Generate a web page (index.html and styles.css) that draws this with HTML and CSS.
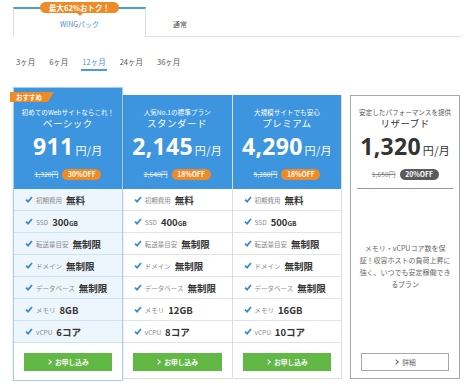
FILE: index.html
```html
<!DOCTYPE html>
<html lang="ja">
  <head>
    <meta charset="UTF-8" />
    <meta name="viewport" content="width=device-width, initial-scale=1.0" />
    <title>料金プラン</title>
    <link rel="stylesheet" href="styles.css">
  </head>
  <body>
    <div class="page">
      <div class="plan-tabs">
        <div class="plan-tab active">
          <span class="badge">最大62%おトク！</span>
          WINGパック
        </div>
        <div class="plan-tab normal">通常</div>
      </div>

      <div class="periods">
        <span class="period">3ヶ月</span>
        <span class="period">6ヶ月</span>
        <span class="period current">12ヶ月</span>
        <span class="period">24ヶ月</span>
        <span class="period">36ヶ月</span>
      </div>

      <div class="cards">
        <div class="card basic">
          <span class="ribbon">おすすめ</span>
          <div class="card-head">
            <p class="lead">初めてのWebサイトならこれ！</p>
            <p class="name">ベーシック</p>
            <p class="price">911<span class="unit">円/月</span></p>
            <p class="discount"><s>1,320円</s><span class="off">30%OFF</span></p>
          </div>
          <ul class="specs">
            <li><i class="check"></i><span class="label">初期費用</span><b>無料</b></li>
            <li><i class="check"></i><span class="label">SSD</span><b>300<small>GB</small></b></li>
            <li><i class="check"></i><span class="label">転送量目安</span><b>無制限</b></li>
            <li><i class="check"></i><span class="label">ドメイン</span><b>無制限</b></li>
            <li><i class="check"></i><span class="label">データベース</span><b>無制限</b></li>
            <li><i class="check"></i><span class="label">メモリ</span><b>8GB</b></li>
            <li><i class="check"></i><span class="label">vCPU</span><b>6コア</b></li>
          </ul>
          <div class="card-foot"><a class="btn apply">お申し込み</a></div>
        </div>

        <div class="card">
          <div class="card-head">
            <p class="lead">人気No.1の標準プラン</p>
            <p class="name">スタンダード</p>
            <p class="price">2,145<span class="unit">円/月</span></p>
            <p class="discount"><s>2,640円</s><span class="off">18%OFF</span></p>
          </div>
          <ul class="specs">
            <li><i class="check"></i><span class="label">初期費用</span><b>無料</b></li>
            <li><i class="check"></i><span class="label">SSD</span><b>400<small>GB</small></b></li>
            <li><i class="check"></i><span class="label">転送量目安</span><b>無制限</b></li>
            <li><i class="check"></i><span class="label">ドメイン</span><b>無制限</b></li>
            <li><i class="check"></i><span class="label">データベース</span><b>無制限</b></li>
            <li><i class="check"></i><span class="label">メモリ</span><b>12GB</b></li>
            <li><i class="check"></i><span class="label">vCPU</span><b>8コア</b></li>
          </ul>
          <div class="card-foot"><a class="btn apply">お申し込み</a></div>
        </div>

        <div class="card">
          <div class="card-head">
            <p class="lead">大規模サイトでも安心</p>
            <p class="name">プレミアム</p>
            <p class="price">4,290<span class="unit">円/月</span></p>
            <p class="discount"><s>5,280円</s><span class="off">18%OFF</span></p>
          </div>
          <ul class="specs">
            <li><i class="check"></i><span class="label">初期費用</span><b>無料</b></li>
            <li><i class="check"></i><span class="label">SSD</span><b>500<small>GB</small></b></li>
            <li><i class="check"></i><span class="label">転送量目安</span><b>無制限</b></li>
            <li><i class="check"></i><span class="label">ドメイン</span><b>無制限</b></li>
            <li><i class="check"></i><span class="label">データベース</span><b>無制限</b></li>
            <li><i class="check"></i><span class="label">メモリ</span><b>16GB</b></li>
            <li><i class="check"></i><span class="label">vCPU</span><b>10コア</b></li>
          </ul>
          <div class="card-foot"><a class="btn apply">お申し込み</a></div>
        </div>

        <div class="card reserved">
          <div class="card-head">
            <p class="lead">安定したパフォーマンスを提供</p>
            <p class="name">リザーブド</p>
            <p class="price">1,320<span class="unit">円/月</span></p>
            <p class="discount"><s>1,650円</s><span class="off">20%OFF</span></p>
          </div>
          <div class="reserved-body">
            <p>メモリ・vCPUコア数を保証！収容ホストの負荷上昇に強く、いつでも安定稼働できるプラン</p>
          </div>
          <div class="card-foot"><a class="btn detail">詳細</a></div>
        </div>
      </div>
    </div>
  </body>
</html>
```

FILE: styles.css
```css
* {
  box-sizing: border-box;
}
body {
  margin: 0;
  background-color: #fff;
  color: #333;
  font-family: "Noto Sans CJK JP", "Noto Sans", sans-serif;
}
p {
  margin: 0;
}
.page {
  padding: 7px 14px 0 13px;
}

/* top tabs */
.plan-tabs {
  display: flex;
  height: 30px;
}
.plan-tab {
  font-size: 7px;
  line-height: 10px;
}
.plan-tab.active {
  position: relative;
  width: 133px;
  border-top: 2px solid #4a9be2;
  border-left: 1px solid #dedede;
  border-right: 1px solid #dedede;
  padding-top: 10px;
  text-align: center;
  color: #4a8fd2;
}
.plan-tab.normal {
  flex: 1;
  border-bottom: 1px solid #dedede;
  padding: 12px 0 0 27px;
  color: #555;
}
.badge {
  position: absolute;
  top: -7px;
  left: 26px;
  width: 79px;
  height: 11px;
  border-radius: 6px;
  background-color: #f08a24;
  color: #fff;
  font-size: 7.5px;
  font-weight: bold;
  line-height: 11px;
  text-align: center;
}
.badge::after {
  content: "";
  position: absolute;
  left: 37px;
  bottom: -3px;
  border-left: 3px solid transparent;
  border-right: 3px solid transparent;
  border-top: 3px solid #f08a24;
}

/* period switch */
.periods {
  display: flex;
  gap: 12px;
  margin: 19px 0 0 2px;
}
.period {
  padding: 0 1px 1px;
  font-size: 7.5px;
  line-height: 12px;
  color: #555;
  border-bottom: 2px solid transparent;
}
.period.current {
  color: #4a8fd2;
  border-bottom-color: #4a9be2;
}

/* plan cards */
.cards {
  display: flex;
  align-items: flex-start;
  margin-top: 24px;
}
.card {
  width: 110px;
  border-right: 1px solid #dedede;
  border-bottom: 1px solid #dedede;
}
.card.basic {
  position: relative;
  margin-top: -8px;
  border: 1px solid #a9cdef;
  box-shadow: 0 1px 3px rgba(0, 0, 0, 0.12);
}
.card.reserved {
  margin-left: 8px;
  border: 1px solid #a8a8a8;
}
.ribbon {
  position: absolute;
  top: 4px;
  left: -4px;
  width: 44px;
  height: 10px;
  padding-left: 6px;
  background-color: #f08a24;
  color: #fff;
  font-size: 6.5px;
  font-weight: bold;
  line-height: 10px;
  clip-path: polygon(0 0, 100% 0, 86% 100%, 0 100%);
}
.ribbon::after {
  content: "";
  position: absolute;
  left: 0;
  top: 10px;
  border-top: 2px solid #7a3d08;
  border-left: 3px solid transparent;
}
.card-head {
  height: 94px;
  padding-top: 13px;
  background-color: #3d95e0;
  color: #fff;
  text-align: center;
}
.card.basic .card-head {
  height: 101px;
  padding-top: 20px;
}
.lead {
  font-size: 6.6px;
  line-height: 9px;
}
.name {
  font-size: 9.5px;
  line-height: 12px;
  letter-spacing: 0.5px;
}
.price {
  margin-top: 5px;
  font-family: "Noto Sans", sans-serif;
  font-size: 23px;
  font-weight: bold;
  line-height: 24px;
  letter-spacing: 0.3px;
}
.unit {
  margin-left: 2px;
  font-family: "Noto Sans CJK JP", sans-serif;
  font-size: 11px;
  font-weight: normal;
}
.discount {
  display: flex;
  justify-content: center;
  align-items: center;
  gap: 4px;
  margin-top: 7px;
  font-size: 6.8px;
  line-height: 11px;
}
.discount s {
  opacity: 0.9;
}
.off {
  width: 39px;
  height: 11px;
  border-radius: 6px;
  background-color: #f08a24;
  color: #fff;
  font-weight: bold;
  font-size: 6.8px;
}

/* spec rows */
.specs {
  list-style: none;
  margin: 0;
  padding: 0;
}
.specs li {
  display: flex;
  align-items: center;
  height: 22px;
  padding-left: 11px;
  border-bottom: 1px solid #e3e3e3;
  white-space: nowrap;
}
.card.basic .specs li {
  background-color: #eef6fd;
  border-bottom-color: #cfe2f4;
}
.check {
  width: 8px;
  height: 7px;
  margin-right: 3px;
  background: url("data:image/svg+xml,%3Csvg xmlns='http://www.w3.org/2000/svg' viewBox='0 0 8 7'%3E%3Cpath d='M1 3.6 3.1 5.6 7 1' fill='none' stroke='%233a8bd6' stroke-width='1.8'/%3E%3C/svg%3E") no-repeat center;
}
.label {
  margin-right: 4px;
  font-size: 6.5px;
  color: #8a8a8a;
}
.specs b {
  font-size: 9.5px;
  color: #333;
}
.specs small {
  font-size: 6.5px;
}

.card-foot {
  height: 35px;
  padding: 10px 10px 0;
}
.card.basic .card-foot {
  height: 37px;
}
.btn {
  display: flex;
  justify-content: center;
  align-items: center;
  gap: 4px;
  height: 18px;
  font-size: 6.8px;
  font-weight: bold;
}
.btn::before {
  content: "";
  width: 3px;
  height: 3px;
  border-top: 1px solid currentColor;
  border-right: 1px solid currentColor;
  transform: rotate(45deg);
}
.btn.apply {
  background-color: #62b845;
  color: #fff;
}
.btn.detail {
  border: 1px solid #a8a8a8;
  background-color: #fff;
  color: #666;
  font-weight: normal;
}

/* reserved plan */
.card.reserved .card-head {
  height: 93px;
  margin: 0 6px;
  padding-top: 12px;
  background-color: #fff;
  color: #333;
  border-bottom: 1px solid #9a9a9a;
}
.card.reserved .lead {
  color: #555;
}
.card.reserved .discount s {
  color: #777;
}
.card.reserved .off {
  background-color: #5a5a5a;
}
.reserved-body {
  display: flex;
  align-items: center;
  height: 154px;
  padding: 0 8px;
  font-size: 7px;
  line-height: 12px;
  color: #666;
  text-align: center;
}
```
